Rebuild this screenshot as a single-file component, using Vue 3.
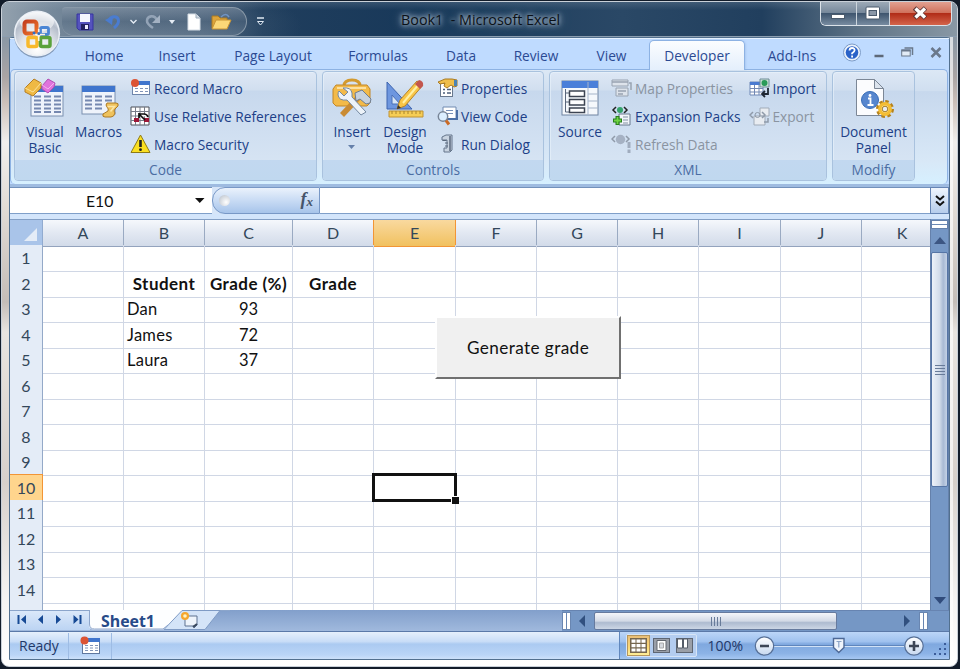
<script setup>
const tabs = ['Home', 'Insert', 'Page Layout', 'Formulas', 'Data', 'Review', 'View', 'Developer', 'Add-Ins']
const columns = ['A', 'B', 'C', 'D', 'E', 'F', 'G', 'H', 'I', 'J', 'K']
const cells = {
  B2: 'Student', C2: 'Grade (%)', D2: 'Grade',
  B3: 'Dan', C3: '93',
  B4: 'James', C4: '72',
  B5: 'Laura', C5: '37',
}
</script>

<template>
  <div class="desktop">
    <div class="window">
      <header class="titlebar">
        <div class="qat">
          <svg class="i-save" width="18" height="18" viewBox="0 0 18 18"><path d="M1 1h16v16H3l-2-2z" fill="#5553bd" stroke="#3735a0"/><path d="M4 1h10v8H4z" fill="#f4f6fd"/><path d="M5 11h8v6H5z" fill="#232260"/><path d="M9 12h3v4H9z" fill="#eef"/></svg>
          <svg class="i-undo" width="16" height="18" viewBox="0 0 16 18"><path d="M4 7c3-5 9.500-4 9.500 1 0 3-2 5-4.500 7" fill="none" stroke="#4a7cd0" stroke-width="3"/><path d="M0 7l8-4-1 9z" fill="#4a7cd0"/></svg>
          <svg class="i-chev1" width="9" height="6" viewBox="0 0 9 6"><path d="M1.500 1l3 3 3-3" fill="none" stroke="#e5ecf4" stroke-width="1.400"/></svg>
          <svg class="i-redo" width="17" height="18" viewBox="0 0 17 18"><path d="M12 7C9 1 2 3 2 8c0 3 3 5 6 7" fill="none" stroke="#93a3b6" stroke-width="2.600"/><path d="M15 2v8H7z" fill="#a3b1c2"/></svg>
          <svg class="i-chev2" width="8" height="6" viewBox="0 0 8 6"><path d="M1 1h6L4 5z" fill="#e5ecf4"/></svg>
          <svg class="i-new" width="14" height="18" viewBox="0 0 14 18"><path d="M1 1h8l4 4v12H1z" fill="#fff" stroke="#d5dde5"/><path d="M9 1v4h4" fill="#cfd8e2" stroke="#9eacba"/></svg>
          <svg class="i-open" width="21" height="18" viewBox="0 0 21 18"><path d="M1 15V3h6l2 2h7v4z" fill="#dda43a" stroke="#a97b24"/><path d="M10 4q5-5 8 0" fill="none" stroke="#7094c4" stroke-width="1.500"/><path d="M1 16l4-9h15l-4 9z" fill="#fbd878" stroke="#c89434"/></svg>
        </div>
        <svg class="i-more" width="9" height="10" viewBox="0 0 9 10"><path d="M1 1h7" stroke="#dfe8f2" stroke-width="1.300"/><path d="M1.500 4.500h6l-3 3.500z" fill="#25415f" stroke="#dfe8f2"/></svg>
        <div class="title">Book1&nbsp; - Microsoft Excel</div>
        <div class="winbtns">
          <div class="wb min"><svg width="34" height="22" viewBox="0 0 34 22"><rect x="10.500" y="12.500" width="13" height="4" fill="#fff" stroke="#4a5a6c"/></svg></div>
          <div class="wb max"><svg width="32" height="22" viewBox="1 0 32 22"><rect x="10" y="5" width="13.500" height="12" rx="1" fill="#fff" stroke="#4a5a6c"/><rect x="13" y="8.500" width="7.500" height="5" fill="#8a97a7" stroke="#4a5a6c"/></svg></div>
          <div class="wb close"><svg width="60" height="22" viewBox="0 0 60 22"><path d="M24.500 6l11 10M35.500 6l-11 10" stroke="#5b3434" stroke-width="5"/><path d="M25.500 6.500l9.500 9M35 6.500l-9.500 9" stroke="#fff" stroke-width="3.400"/></svg></div>
        </div>
      </header>

      <svg class="orb" width="48" height="50" viewBox="0 0 48 50">
        <defs>
          <radialGradient id="orbFill" cx="50%" cy="85%" r="85%"><stop offset="0" stop-color="#fff"/><stop offset=".45" stop-color="#dfe3ea"/><stop offset=".75" stop-color="#b5bdca"/><stop offset="1" stop-color="#f2f5fa"/></radialGradient>
          <linearGradient id="orbRed" x2="1" y2="1"><stop offset="0" stop-color="#c43f20"/><stop offset="1" stop-color="#ee7429"/></linearGradient>
        </defs>
        <circle cx="24" cy="26" r="23" fill="#374a62" opacity=".45"/>
        <circle cx="24" cy="24.500" r="22.300" fill="url(#orbFill)" stroke="#e9eef5" stroke-width="1.600"/>
        <ellipse cx="24" cy="13" rx="17" ry="10" fill="#fff" opacity=".55"/>
        <rect x="11.500" y="12.500" width="12" height="12" rx="2.500" fill="none" stroke="url(#orbRed)" stroke-width="4"/>
        <rect x="27.500" y="18.500" width="8" height="7" rx="1.500" fill="none" stroke="#4b86d4" stroke-width="2.800"/>
        <rect x="15" y="28.500" width="9" height="9" rx="1.500" fill="none" stroke="#f8b92c" stroke-width="3.500"/>
        <rect x="27.500" y="28.500" width="9.500" height="9" rx="1.500" fill="none" stroke="#5ba23c" stroke-width="3.500"/>
        <path d="M20 25.500h12M25.700 20v12" stroke="#fff3df" stroke-width="1.600"/>
        <circle cx="21" cy="24" r="1.500" fill="#2f6fc6"/><circle cx="25.800" cy="24.500" r="1.500" fill="#2f6fc6"/>
      </svg>

      <main class="client">
        <nav class="tabs">
          <div v-for="t in tabs" :key="t" class="tab" :class="{ active: t === 'Developer' }"><span>{{ t }}</span></div>
          <svg class="docbtns" width="104" height="28" viewBox="0 0 104 28">
            <circle cx="13" cy="13.500" r="8.500" fill="#e9f1fb" stroke="#7d9cc8"/><circle cx="13" cy="13.500" r="6.300" fill="#2a62c8"/>
            <path d="M10.500 11.500q0-2.500 2.600-2.500t2.500 2.300q0 1.300-2.500 3v1M13.100 16.500v2" fill="none" stroke="#fff" stroke-width="1.800"/>
            <path d="M35.500 17h9" stroke="#5d6878" stroke-width="2.400"/>
            <path d="M65.500 9h8v7" fill="none" stroke="#6a788b" stroke-width="1.500"/><rect x="62.700" y="11" width="8.500" height="6" fill="#e2ebf6" stroke="#6a788b"/><path d="M62.500 11.500h9" stroke="#6a788b" stroke-width="1.800"/>
            <path d="M92.500 9l9 9M101.500 9l-9 9" stroke="#6a788b" stroke-width="2.600"/>
          </svg>
        </nav>

        <section class="ribbon">
          <div class="group g-code">
            <div class="tools">
              <div class="big w60">
                <svg width="42" height="42" viewBox="0 0 42 42"><rect x="7" y="9" width="32" height="30" fill="#eef3fb" stroke="#7b90b0"/><path d="M7 9h32v6H7z" fill="#3f75cd"/><path d="M10 19.500h7M10 23.500h7M10 27.500h7M10 31.500h7M10 35h7M20 19.500h7M20 23.500h7M20 27.500h7M20 31.500h7M20 35h7M30 19.500h7M30 23.500h7M30 27.500h7M30 31.500h7M30 35h7" stroke="#7588b0" stroke-width="1.800"/><path d="M1 11l9-9 7 4v5l-8 8-8-4z" fill="#efb944" stroke="#b57e25"/><path d="M1 11l8 4 8-9" fill="none" stroke="#fbe19a"/><path d="M18 9l6-7 7 4-1 4-6 6-6-4z" fill="#e073dc" stroke="#b04eb5"/><path d="M18 8l6 4 6-6" fill="none" stroke="#f6b0ee"/></svg>
                <span>Visual<br>Basic</span>
              </div>
              <div class="big w47">
                <svg width="40" height="42" viewBox="0 0 40 42"><rect x="3" y="9" width="33" height="28" fill="#eef3fb" stroke="#7b90b0"/><path d="M3 9h33v6H3z" fill="#3f75cd"/><path d="M6 19.500h7M6 23.500h7M6 27.500h7M6 31.500h7M16 19.500h7M16 23.500h7M16 27.500h7M16 31.500h7M26 19.500h7M26 23.500h7" stroke="#7588b0" stroke-width="1.800"/><path d="M28 26h9q3 0 2 3l-3 3q-2 2 0 4-1 4-4 4h-6q-3 0-2-3l5-3q1-2-1-4-2-2 0-4z" fill="#efc25c" stroke="#ac7a25"/><path d="M28.500 29.500h7l-4 5" stroke="#fbe6a8" stroke-width="1.500" fill="none"/></svg>
                <span>Macros</span>
              </div>
              <div class="stack">
                <div class="small"><svg width="21" height="20" viewBox="0 0 21 20"><rect x="2.500" y="3.500" width="17" height="13" fill="#fff" stroke="#6f86ab"/><path d="M2 3h18v4H2z" fill="#3f75cd"/><path d="M5 10.500h3M10 10.500h3M15 10.500h3M5 13.500h3M10 13.500h3M15 13.500h3" stroke="#8194b8"/><circle cx="5" cy="5" r="4" fill="#dc5434"/></svg><span>Record Macro</span></div>
                <div class="small"><svg width="21" height="20" viewBox="0 0 21 20"><path d="M1 1h18v18H1z" fill="#fff" stroke="#4c5058"/><path d="M5.500 1v18M10 1v18M14.500 1v18M1 5.500h18M1 10h18M1 14.500h18" stroke="#777c88"/><path d="M4 12h5v4H4zM14 12h5v4h-5z" fill="#9e1838"/><path d="M10 8h7v4l-3-2-3 3z" fill="#fff"/><path d="M9 8h5q3 0 4 3M9 7v5M9 8l6 6" fill="none" stroke="#101010" stroke-width="1.700"/></svg><span>Use Relative References</span></div>
                <div class="small"><svg width="21" height="20" viewBox="0 0 21 20"><path d="M10.500 1l9.500 17.500H1z" fill="#fadf22" stroke="#8e7a15"/><path d="M10.500 6v7" stroke="#222" stroke-width="2.600"/><circle cx="10.500" cy="15.700" r="1.400" fill="#222"/></svg><span>Macro Security</span></div>
              </div>
            </div>
            <div class="caption">Code</div>
          </div>

          <div class="group g-controls">
            <div class="tools">
              <div class="big w58">
                <svg width="44" height="42" viewBox="0 0 44 42"><path d="M14 9q0-6 8-6t8 6" fill="none" stroke="#d39a2e" stroke-width="3"/><path d="M6 8h31l3 4v14l-3 3H6l-3-3V12z" fill="#f3ba49" stroke="#c18628"/><path d="M7 11h29" stroke="#fce0a0" stroke-width="2"/><path d="M12 38l16-17" stroke="#c98b33" stroke-width="5.500"/><path d="M25 16l7-3 9 9-1 4-4 1-6-5-4 2z" fill="#c6d1de" stroke="#6d7d92"/><path d="M31 38L17 23q-8 1-9-5 0-3 1-4l5 5 4-4-5-4q8-1 9 5v4l14 15z" fill="#edf3f9" stroke="#7388a0"/></svg>
                <span>Insert</span><svg width="8" height="5" viewBox="0 0 8 5" class="drop"><path d="M0 0h7L3.500 4z" fill="#6580aa"/></svg>
              </div>
              <div class="big w48">
                <svg width="42" height="42" viewBox="0 0 42 42"><path d="M3 5v27h25z" fill="#6d96df" stroke="#3e65b0"/><path d="M8 18v9h8z" fill="#d6e5f6" stroke="#4b70b6"/><path d="M5 34h34v6H5z" fill="#f6cd55" stroke="#c09232"/><path d="M8 34v3M12 34v3M16 34v3M20 34v3M24 34v3M28 34v3M32 34v3M36 34v3" stroke="#a7842f"/><path d="M13 32l3-9L33 4l6 4-18 21z" fill="#f8c547" stroke="#b68428"/><path d="M19 26L35 7" stroke="#fff0a4" stroke-width="2"/><path d="M31 7l4-4q5 1 4 6l-3 3z" fill="#c3564e"/><path d="M13 32l1-4 3 3z" fill="#333"/></svg>
                <span>Design<br>Mode</span>
              </div>
              <div class="stack">
                <div class="small"><svg width="21" height="20" viewBox="0 0 21 20"><rect x="3.500" y="5.500" width="12" height="13" fill="#fff" stroke="#68788e"/><path d="M6 11.500h2M10 11.500h4M6 15h2M10 15h4" stroke="#4c5f7b" stroke-width="1.500"/><path d="M1 4l7-3h7l5 1v6l-3 1-3-2-4 3-3-2 1-3-5 1z" fill="#efbe4b" stroke="#aa7b23"/><path d="M17 2h3v6h-3z" fill="#4b83b4"/></svg><span>Properties</span></div>
                <div class="small"><svg width="21" height="20" viewBox="0 0 21 20"><path d="M6 1h13v12H6z" fill="#fff" stroke="#718bb1"/><path d="M9 4.500h7M9 7.500h7" stroke="#7791b9"/><path d="M10 13h10V4" fill="none" stroke="#4b6fa5" stroke-width="2"/><circle cx="6" cy="10.500" r="4.700" fill="#dcefff" stroke="#788597" stroke-width="1.500"/><path d="M9 14.500l3 4" stroke="#ca6a26" stroke-width="3"/></svg><span>View Code</span></div>
                <div class="small"><svg width="21" height="20" viewBox="0 0 21 20"><path d="M5 3l4-2h6v15l-2 2H7v-4h3V6H5z" fill="#c9d4e1" stroke="#64758b"/><path d="M13 2v15" stroke="#5a697c" stroke-width="1.500"/><path d="M5.500 6.500h4M8 9h3M8 12h3" stroke="#5a697c"/></svg><span>Run Dialog</span></div>
              </div>
            </div>
            <div class="caption">Controls</div>
          </div>

          <div class="group g-xml">
            <div class="tools">
              <div class="big w60">
                <svg width="42" height="42" viewBox="0 0 42 42"><rect x="3" y="4" width="36" height="34" fill="#f5f8fc" stroke="#6f84a2"/><path d="M3 4h36v7H3z" fill="#4a7fd9"/><path d="M29 5v33M29 17h10M29 24h10M29 31h10" stroke="#a5b4c9"/><path d="M6.500 12v23h4M6.500 16h4M6.500 25h4" fill="none" stroke="#59667b"/><path d="M10.500 14h15v5.500h-15zM10.500 22.500h15V28h-15zM10.500 31h15v4.500h-15z" fill="#fff" stroke="#3d4452" stroke-width="1.500"/></svg>
                <span>Source</span>
              </div>
              <div class="stack s-xml">
                <div class="small off"><svg width="21" height="20" viewBox="0 0 21 20"><path d="M1 2h16v6H1zM5 10h12v8H5z" fill="#dde3eb" stroke="#98a3b1"/><path d="M1 4h16M7 13h8M7 16h5M18 5h2v7" fill="none" stroke="#98a3b1" stroke-width="1.500"/></svg><span>Map Properties</span></div>
                <div class="small"><svg width="21" height="20" viewBox="0 0 21 20"><path d="M5 1L2 4l3 3M13 1l3 3-3 3" fill="none" stroke="#222" stroke-width="1.500"/><circle cx="9" cy="4" r="3" fill="#35a36b"/><path d="M8 8h11v11H8z" fill="#f2f5fa" stroke="#68788e"/><path d="M12 11h5M12 14h5M12 17h5" stroke="#8492a5"/><path d="M6.500 10v9M2 14.500h9" stroke="#267e1b" stroke-width="4"/><path d="M6.500 11v7M3 14.500h7" stroke="#6ed344" stroke-width="1.800"/></svg><span>Expansion Packs</span></div>
                <div class="small off"><svg width="21" height="20" viewBox="0 0 21 20"><path d="M4 2L1 5l3 3M15 2l3 3-3 3" fill="none" stroke="#8f9aa9" stroke-width="1.500"/><circle cx="9.500" cy="5.500" r="4.700" fill="#a5b1c3"/><path d="M18 8v6M18 15.500v3.500" stroke="#a0acbe" stroke-width="3"/></svg><span>Refresh Data</span></div>
              </div>
              <div class="stack s-imp">
                <div class="small"><svg width="21" height="20" viewBox="0 0 21 20"><path d="M1 4h13v13H1z" fill="#fff" stroke="#6e88b6"/><path d="M1 4h13v3H1z" fill="#4a7ad0"/><path d="M5.500 7v10M10 7v10M1 10.500h13M1 14h13" stroke="#7187b3"/><path d="M11 1h9v8h-9z" fill="#c9e0d5" stroke="#6e8c98"/><circle cx="15.500" cy="5" r="3" fill="#2a9b58"/><path d="M19 10v6h-5M16 13l-3 3 3 3" fill="none" stroke="#1f2733" stroke-width="1.800"/></svg><span>Import</span></div>
                <div class="small off"><svg width="21" height="20" viewBox="0 0 21 20"><path d="M5 10h11v9H5zM11 2h9v8h-9z" fill="#e8ecf1" stroke="#a1abb8"/><path d="M4 6L1 9l3 3M13 6l3 3-3 3M19 12v4h-4" fill="none" stroke="#8f9aa9" stroke-width="1.500"/><circle cx="8.500" cy="9" r="2.500" fill="none" stroke="#8f9aa9"/></svg><span>Export</span></div>
              </div>
            </div>
            <div class="caption">XML</div>
          </div>

          <div class="group g-modify">
            <div class="tools">
              <div class="big w81">
                <svg width="42" height="42" viewBox="0 0 42 42"><path d="M3.500 2.500h18l9 9v27h-27z" fill="#fbfcfe" stroke="#7c8796"/><path d="M21.500 2.500v9h9z" fill="#dce4ee" stroke="#7c8796"/><circle cx="17" cy="23" r="8.500" fill="#5686ce" stroke="#376db8"/><path d="M15 21.500h2.500v6M14.500 28h6" fill="none" stroke="#fff" stroke-width="1.800"/><circle cx="17" cy="18.500" r="1.400" fill="#fff"/><circle cx="32" cy="32" r="7" fill="none" stroke="#b5821c" stroke-width="4" stroke-dasharray="3.200 2.300"/><circle cx="32" cy="32" r="5.200" fill="#fff3c1" stroke="#f4bd33" stroke-width="3.500"/><circle cx="32" cy="32" r="2.800" fill="#e7edf4" stroke="#a47b22"/></svg>
                <span>Document<br>Panel</span>
              </div>
            </div>
            <div class="caption">Modify</div>
          </div>
        </section>

        <section class="formula">
          <div class="namebox"><span>E10</span><svg width="10" height="6" viewBox="0 0 10 6"><path d="M0 0h9.500L4.750 5z" fill="#111"/></svg></div>
          <div class="fxbox"><i class="knob"></i><span class="fx">f<sub>x</sub></span></div>
          <div class="input"></div>
          <div class="expand"><svg width="12" height="14" viewBox="0 0 12 14"><path d="M2 2l4 3.500L10 2M2 7.500L6 11l4-3.500" fill="none" stroke="#111" stroke-width="2"/></svg></div>
        </section>

        <section class="work">
          <div class="sheet">
            <div class="row head">
              <div class="corner"><svg width="14" height="14" viewBox="0 0 14 14"><path d="M13 0v13H0z" fill="#e4ecf7"/></svg></div>
              <div v-for="c in columns" :key="c" class="colhead" :class="{ sel: c === 'E' }">{{ c }}</div>
            </div>
            <div v-for="r in 15" :key="r" class="row">
              <div class="rowhead" :class="{ sel: r === 10 }">{{ r < 15 ? r : '' }}</div>
              <div v-for="c in columns" :key="c" class="cell" :class="{ bold: r === 2, center: r === 2 || c === 'C' }">{{ cells[c + r] }}</div>
            </div>
            <div class="selection"><i></i></div>
            <button class="generate">Generate grade</button>
          </div>
          <div class="vscroll">
            <div class="split"></div>
            <div class="arrow"><svg width="12" height="7" viewBox="0 0 12 7"><path d="M6 0l6 7H0z" fill="#3c5683"/></svg></div>
            <div class="vthumb"><i></i><i></i><i></i><i></i></div>
            <div class="arrow low"><svg width="12" height="7" viewBox="0 0 12 7"><path d="M6 7l6-7H0z" fill="#304b7b"/></svg></div>
          </div>
        </section>

        <section class="sheetbar">
          <svg class="tabstrip" width="220" height="21" viewBox="0 0 220 21">
            <defs><linearGradient id="nav" x2="0" y2="1"><stop offset="0" stop-color="#dce9fa"/><stop offset="1" stop-color="#bcd4f3"/></linearGradient></defs>
            <path d="M0 0h80v20H0z" fill="url(#nav)"/><path d="M0 .500h220" stroke="#8ba5cb"/>
            <path d="M79 0h98l-18 19.500H84q-5 0-5-5z" fill="#fdfeff"/><path d="M79.500 0v14q0 5 5 5H153l5-4" fill="none" stroke="#8ea6cb"/>
            <path d="M172 .500h38L195 19.500h-41z" fill="#d4e4f8" stroke="#7f9bc5"/>
            <g fill="#174a95"><path d="M7.500 5h2v9h-2zM16 5v9l-5-4.500zM33 5v9l-5-4.500zM46 5v9l5-4.500zM63.500 5v9l5-4.500zM69.500 5h2v9h-2z"/></g>
            <path d="M175 6h12v9l-3 3v-2h-9z" fill="#eef4fb" stroke="#5f7391"/><path d="M183 17l4-3" stroke="#39495f" stroke-width="2"/><circle cx="175" cy="6" r="4" fill="#f6a62d"/><circle cx="175" cy="6" r="1.800" fill="#fff2c4"/>
          </svg>
          <span class="sheetname">Sheet1</span>
          <div class="hscroll">
            <i class="grip"></i>
            <svg width="6" height="12" viewBox="0 0 6 12"><path d="M6 0v12L0 6z" fill="#31507f"/></svg>
            <div class="hthumb"><i></i><i></i><i></i><i></i></div>
            <svg class="rt" width="6" height="12" viewBox="0 0 6 12"><path d="M0 0v12l6-6z" fill="#31507f"/></svg>
            <i class="grip"></i>
          </div>
        </section>

        <footer class="status">
          <span class="ready">Ready</span>
          <div class="rec"><svg width="21" height="19" viewBox="0 0 21 19"><rect x="2.500" y="2.500" width="17" height="15" fill="#fff" stroke="#60789f"/><path d="M2 2h18v4H2z" fill="#3f75cd"/><path d="M5 9.500h3M10 9.500h3M15 9.500h3M5 12h3M10 12h3M15 12h3M5 14.500h3M10 14.500h3M15 14.500h3" stroke="#8194b8"/><circle cx="4.500" cy="4.500" r="4" fill="#dc5434"/></svg></div>
          <div class="fill"></div>
          <div class="tray">
          <div class="views">
            <div class="v on"><svg width="17" height="15" viewBox="0 0 17 15"><path d="M0 0h17v15H0z" fill="#75664e"/><path d="M1.500 1.500h4v3.300h-4zM6.500 1.500h4v3.300h-4zM11.500 1.500h4v3.300h-4zM1.500 6h4v3.300h-4zM6.500 6h4v3.300h-4zM11.500 6h4v3.300h-4zM1.500 10.500h4v3h-4zM6.500 10.500h4v3h-4zM11.500 10.500h4v3h-4z" fill="#fff"/></svg></div>
            <div class="v"><svg width="17" height="15" viewBox="0 0 17 15"><rect x=".500" y=".500" width="16" height="14" fill="#9a9fa8" stroke="#5e6673"/><path d="M4 2.500h9v10H4z" fill="#fff" stroke="#63676f"/><path d="M6.500 5h4v5h-4z" fill="#d7dae0" stroke="#aaa"/></svg></div>
            <div class="v"><svg width="17" height="15" viewBox="0 0 17 15"><rect x=".500" y=".500" width="16" height="14" fill="#9a9fa8" stroke="#5e6673"/><path d="M1.500 1h5v9h-5zM7.500 1h4v9h-4z" fill="#fff" stroke="#555d69"/></svg></div>
          </div>
          <span class="pct">100%</span>
          <svg class="zoomer" width="191" height="26" viewBox="0 0 191 26">
            <defs><linearGradient id="zb" x2="0" y2="1"><stop offset="0" stop-color="#fff"/><stop offset="1" stop-color="#c6d8ef"/></linearGradient></defs>
            <path d="M33 12.500h130" stroke="#5f86bd"/><path d="M33 13.500h130" stroke="#d1e2f7"/>
            <circle cx="23.500" cy="13" r="9.200" fill="url(#zb)" stroke="#566f96" stroke-width="1.200"/><path d="M19 13h9" stroke="#3c4656" stroke-width="2.600"/>
            <circle cx="173" cy="13" r="9.200" fill="url(#zb)" stroke="#566f96" stroke-width="1.200"/><path d="M168 13h10M173 8v10" stroke="#3c4656" stroke-width="2.600"/>
            <path d="M92.500 5.500H103v9l-5.200 5-5.300-5z" fill="#eef4fc" stroke="#4d6896" stroke-width="1.400"/><path d="M95.500 8.500h5M97.800 8.500v6" stroke="#8aa3c6" stroke-width="1.200"/>
          </svg>
          <svg class="resize" width="16" height="14" viewBox="0 0 16 14"><g fill="#3b5c99"><path d="M12 1h2v2h-2zM7 6h2v2H7zM12 6h2v2h-2zM2 11h2v2H2zM7 11h2v2H7zM12 11h2v2h-2z"/></g></svg>
          </div>
        </footer>
      </main>
    </div>
  </div>
</template>

<style>
body { margin: 0; overflow: hidden; }
</style>
<style scoped>
* { box-sizing: border-box; }
svg { display: block; flex: none; }
.desktop { width: 960px; height: 669px; padding: 1px 2px 2px 1px; background: #121c2a; font-family: "Open Sans", "Noto Sans", sans-serif; overflow: hidden; }
.window { position: relative; width: 957px; height: 666px; border: 1px solid #c9d0d8; border-radius: 8px; padding: 0 7px; overflow: hidden;
  background: linear-gradient(90deg, transparent 0 948px, #ffffffaa 948px 951px, transparent 951px), linear-gradient(180deg, #8594a2 0, #8d99a5 40px, #aaa5a5 75px, #cbbfb9 100px, #f1efed 140px, #e0dad4 210px, #c4bdb8 300px, #e8e4e0 330px, #d6d0cb 480px, #f5f4f3 600px, #fff); }
.titlebar { height: 35px; margin: 0 -7px; padding-left: 60px; display: flex; align-items: flex-start; border-bottom: 1px solid #8c9eb0;
  background: radial-gradient(ellipse 110px 40px at 190px 25px, #70849760, transparent), linear-gradient(180deg, #a9b7c533, transparent 8px), linear-gradient(90deg, #93a1ae 0, #76899b 50px, #5b7085 120px, #3c5570 205px, #203e5d 260px, #19395a 400px, #2a4866 620px, #213f5e 760px, #5f7487 860px, #8998a5 100%); }
.qat { width: 185px; height: 29px; margin-top: 5px; border: 1px solid #8999a8; border-left: 0; border-radius: 4px 15px 15px 12px; display: flex; align-items: center; background: linear-gradient(180deg, #8b9aab88, #52687f77 50%, #74879a77); }
.i-save { margin-left: 14px; }
.i-undo { margin-left: 11px; }
.i-chev1 { margin-left: 8px; }
.i-redo { margin-left: 7px; }
.i-chev2 { margin-left: 6px; }
.i-new { margin-left: 11px; }
.i-open { margin-left: 10px; }
.i-more { margin: 15px 0 0 9px; }
.title { margin-left: 136px; margin-top: 8px; width: 162px; height: 20px; line-height: 19px; font-size: 14.35px; color: #0b1118; white-space: nowrap; text-shadow: 0 0 4px #c5d3e0, 0 0 7px #a9bccdcc, 0 0 11px #b9cbdbaa; }
.winbtns { margin-left: auto; margin-right: 5px; width: 132px; height: 24px; display: flex; border: 1px solid #dbe2e9; border-top: 0; border-radius: 0 0 6px 6px; overflow: hidden; }
.wb { width: 36px; background: linear-gradient(#9daab7, #75879a 48%, #3f566f 50%, #778ba0); border-right: 1px solid #ccd5dd; }
.max { width: 34px; }
.close { width: 61px; border: 0; background: linear-gradient(#e2a191, #cf705b 48%, #b12d18 50%, #d4644b); }
.orb { position: absolute; left: 11px; top: 7px; }
.client { width: 941px; height: 623px; border: 1px solid #52708f; border-radius: 3px 3px 0 0; background: #bfdbff; }
.tabs { height: 31px; display: grid; grid-template-columns: 72px 74px 118px 92px 74px 76px 75px 96px 94px 104px; padding-left: 58px; color: #2b4a93; font-size: 13.7px; border-top: 1px solid #e7f2ff; }
.tab { text-align: center; padding-top: 3px; line-height: 27px; white-space: nowrap; }
.active { border: 1px solid #8db2e3; border-bottom: 0; border-radius: 5px 5px 0 0; background: linear-gradient(#fbfdff, #e4effc); margin-top: 1px; padding-top: 1px; height: 30px; box-shadow: 1px 0 2px #87a9d455; }
.ribbon { height: 115px; width: 938px; padding: 1px 0 3px 3px; display: flex; gap: 5px; border: 1px solid #8db2e3; border-width: 1px 1px 0; border-radius: 5px; background: linear-gradient(#dce8f5, #d0dff0 18%, #c7d8ed 19%, #d8e8f7 80%, #d6f0ff); }
.group { height: 110px; border: 1px solid #a9c2de; border-radius: 4px; overflow: hidden; box-shadow: inset 1px 1px #eaf3fb99; background: linear-gradient(#dee8f5, #d1dfef 18px, #c7d8ed 19px, #dae7f5); }
.g-code { width: 303px; }
.g-controls { width: 222px; }
.g-xml { width: 278px; }
.g-modify { width: 83px; }
.tools { height: 88px; display: flex; color: #203f87; font-size: 13.7px; }
.big { display: flex; flex-direction: column; align-items: center; padding-top: 5px; line-height: 16px; text-align: center; }
.big > span { margin-top: 5px; white-space: nowrap; }
.drop { margin-top: 5px; }
.w60 { width: 60px; }
.w47 { width: 47px; }
.w58 { width: 58px; }
.w48 { width: 48px; }
.w81 { width: 81px; }
.stack { padding: 2px 0 0 8px; }
.s-xml { padding-left: 1px; }
.s-imp { padding-left: 9px; }
.s-imp .small { gap: 2px; }
.small { height: 28px; display: flex; align-items: center; gap: 3px; white-space: nowrap; }
.off { color: #8a94a1; }
.caption { height: 20px; background: linear-gradient(#c2d8f0, #c0d8ef); color: #4b6da3; font-size: 13.7px; line-height: 20px; text-align: center; }
.formula { height: 30px; display: flex; align-items: stretch; border-top: 3px solid #9ebbe0; background: #d6e5f8; }
.formula > div { height: 27px; border-top: 1px solid #7291bb; border-bottom: 1px solid #7f9fc9; background: #fff; }
.formula .namebox { width: 202px; display: flex; align-items: center; font-family: Lato, sans-serif; font-size: 15.8px; color: #111; padding-left: 76px; justify-content: space-between; padding-right: 7px; }
.formula .fxbox { width: 108px; border: 1px solid #7898c6; border-radius: 13px 0 0 13px; background: linear-gradient(#eaf2fc, #c8dbf4 50%, #a7c4ea); display: flex; justify-content: space-between; align-items: center; padding: 0 6px 0 6px; }
.knob { width: 11px; height: 11px; border-radius: 50%; background: radial-gradient(circle at 65% 65%, #fff, #b5bdc8); }
.fx { font-family: "Liberation Serif", serif; font-style: italic; font-weight: bold; font-size: 18px; color: #45546a; line-height: 20px; padding-bottom: 3px; }
.fx sub { font-size: 13px; line-height: 0; vertical-align: -1px; }
.input { flex: 1; }
.formula .expand { width: 19px; border: 1px solid #6685b4; background: linear-gradient(#eff5fd, #b6cdec); display: flex; align-items: center; justify-content: center; }
.work { height: 396px; display: flex; border-top: 5px solid #d3e5fb; }
.sheet { position: relative; width: 920px; height: 391px; overflow: hidden; background: #fff; border-top: 1px solid #839fc5; }
.row { display: grid; grid-template-columns: 33px 81px 81px 88px 81px 82px 81px 81px 81px 82px 81px 81px; height: 25.54px; }
.head { height: 25px; }
.corner { background: #a9c4e9; border-right: 1px solid #91abd0; border-bottom: 1px solid #91abd0; display: flex; align-items: flex-end; justify-content: flex-end; padding: 4px; }
.colhead { border-right: 1px solid #9aaac2; border-bottom: 1px solid #93a3bd; background: linear-gradient(#f5f8fc, #e2e8f2 50%, #d2dbe9); text-align: center; line-height: 26px; font-family: Lato, sans-serif; font-size: 16px; color: #33475a; }
.colhead.sel { background: linear-gradient(#f9d99f, #f1c15f); border-color: #f29536; box-shadow: -1px 0 #f29536; }
.rowhead { background: #e4ecf7; border-right: 1px solid #94a9c8; border-bottom: 1px solid #9fb1cc; font-family: Lato, sans-serif; font-size: 16px; color: #33475a; line-height: 26px; text-align: center; }
.rowhead.sel { background: #ffd58d; border-color: #f29536; box-shadow: 0 -1px #f29536; }
.cell { border-right: 1px solid #d0d7e5; border-bottom: 1px solid #d0d7e5; font-family: Lato, sans-serif; font-size: 16.5px; letter-spacing: .25px; line-height: 26px; padding-left: 3px; color: #111; white-space: nowrap; }
.center { text-align: center; padding: 0; letter-spacing: 0; }
.bold { font-weight: bold; font-size: 17px; letter-spacing: .45px; }
.selection { position: absolute; left: 362px; top: 253px; width: 85px; height: 29px; border: 3px solid #111; }
.selection i { position: absolute; right: -5px; bottom: -5px; width: 8px; height: 8px; background: #111; border: 1px solid #fff; border-right: 0; border-bottom: 0; }
.generate { position: absolute; left: 425px; top: 96px; width: 186px; height: 63px; padding: 0; border: 2px solid; border-color: #fff #707070 #707070 #fff; background: #f0f0f0; font-family: Lato, sans-serif; font-size: 17.2px; letter-spacing: .4px; color: #111; }
.vscroll { width: 19px; display: flex; flex-direction: column; align-items: center; background: #7597c5; border-left: 1px solid #6581ab; border-right: 1px solid #6581ab; }
.split { width: 17px; height: 9px; margin-top: 1px; border: 1px solid #6581ab; background: linear-gradient(#fff 3px, #6b89b4 3px 4px, #fff 4px); }
.arrow { height: 23px; display: flex; align-items: center; }
.vthumb { width: 17px; height: 235px; border: 1px solid #5675a5; border-radius: 2px; background: linear-gradient(90deg, #edf2f9, #d2dcea 50%, #a9bad4 75%, #c5d3e7); display: flex; flex-direction: column; align-items: center; justify-content: center; gap: 2px; }
.vthumb i { width: 10px; height: 1px; background: #687b99; }
.low { margin-top: auto; height: 20px; }
.sheetbar { position: relative; height: 21px; display: flex; background: linear-gradient(#829fcb, #a0b9dd); }
.sheetname { position: absolute; left: 91px; top: 1px; font: bold 15.9px/20px "Open Sans", sans-serif; color: #274a88; }
.hscroll { margin-left: auto; width: 387px; display: flex; align-items: center; padding: 0 21px 0 0; background: #7597c5; border-top: 1px solid #6784b1; }
.grip { width: 9px; height: 18px; border: 1px solid #6986b1; background: linear-gradient(90deg, #fff 3px, #6986b1 3px 4px, #fff 4px); margin-right: 8px; }
.rt { margin-left: auto; margin-right: 9px; }
.hscroll .rt + .grip { margin-right: 0; }
.hthumb { width: 243px; height: 18px; margin-left: 9px; border: 1px solid #667a9e; border-radius: 2px; background: linear-gradient(#f4f6fa, #d3dae6 50%, #aebbd0 60%, #ccd6e5); display: flex; align-items: center; justify-content: center; gap: 2px; }
.hthumb i { width: 1px; height: 9px; background: #687b99; }
.status { height: 28px; display: flex; align-items: center; border-top: 1px solid #5b79a8; background: linear-gradient(#e6f0fc, #c9ddf7 35%, #abcaf1 45%, #bad5f7 85%, #cde1fa); color: #1f3869; font-size: 14px; }
.ready { padding-left: 9px; width: 58px; }
.rec { width: 44px; height: 26px; display: flex; align-items: center; justify-content: center; border: 1px solid #9ebce4; border-width: 0 1px; }
.fill { flex: 1; height: 26px; }
.tray { width: 330px; height: 27px; display: flex; align-items: center; justify-content: flex-end; border-left: 1px solid #6087bd; background: linear-gradient(#bcd6f8, #a0c2ef 35%, #7fa8df 45%, #8cb3e6 80%, #a6c7f2); }
.views { width: 71px; height: 23px; display: flex; border: 1px solid #d7e5f7; border-radius: 2px; background: #b4cdf0; }
.v { width: 23px; display: flex; align-items: center; justify-content: center; }
.on { background: linear-gradient(#e9be77, #fbd976 60%, #ffef99); border: 1px solid #b6965c; }
.pct { width: 46px; margin-right: -2px; text-align: right; white-space: nowrap; }
.resize { margin-right: 1px; margin-top: 6px; }
</style>
